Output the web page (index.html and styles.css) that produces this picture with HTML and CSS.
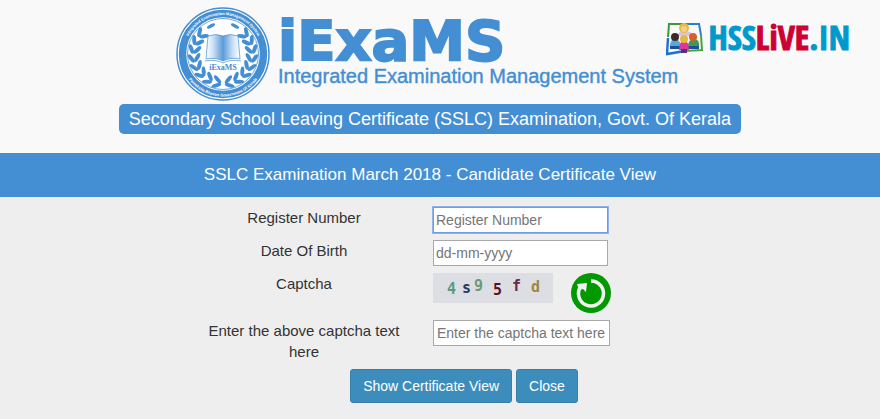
FILE: index.html
```html
<!DOCTYPE html>
<html lang="en">
<head>
    <meta charset="UTF-8">
    <meta name="viewport" content="width=device-width, initial-scale=1.0">
    <title>iExaMS - SSLC Certificate View</title>
    <link rel="stylesheet" href="styles.css">
</head>
<body>
    <header class="header">
        <div class="brand-row">
            <div class="brand">
                <svg class="seal" viewBox="0 0 96 96" role="img" aria-label="iExaMS seal">
                    <defs>
                        <path id="ringTop" d="M9 48a39 39 0 0 1 78 0"/>
                        <path id="ringBottom" d="M5.500 48a42.500 42.500 0 0 0 85 0"/>
                        <linearGradient id="page" x1="0" x2="1">
                            <stop offset="0" stop-color="#fff"/>
                            <stop offset="0.2" stop-color="#cfe1f5"/>
                            <stop offset="0.5" stop-color="#5c9cd9"/>
                            <stop offset="0.8" stop-color="#cfe1f5"/>
                            <stop offset="1" stop-color="#fff"/>
                        </linearGradient>
                        <g id="leaf">
                            <ellipse cx="16" cy="48" rx="2" ry="5" transform="rotate(-28 16 48)"/>
                            <ellipse cx="22" cy="48" rx="2" ry="5" transform="rotate(38 22 48)"/>
                        </g>
                        <g id="branch">
                            <use href="#leaf" transform="rotate(-78 48 48)"/>
                            <use href="#leaf" transform="rotate(-60 48 48)"/>
                            <use href="#leaf" transform="rotate(-42 48 48)"/>
                            <use href="#leaf" transform="rotate(-25 48 48)"/>
                            <use href="#leaf" transform="rotate(-8 48 48)"/>
                            <use href="#leaf" transform="rotate(9 48 48)"/>
                            <use href="#leaf" transform="rotate(26 48 48)"/>
                            <use href="#leaf" transform="rotate(43 48 48)"/>
                            <ellipse cx="36" cy="20" rx="1.600" ry="4.500" transform="rotate(62 36 20)"/>
                        </g>
                    </defs>
                    <circle cx="47" cy="48" r="46" fill="#fff" stroke="#448ed3" stroke-width="1.500"/>
                    <g transform="translate(-1 0)">
                        <circle cx="48" cy="48" r="40.500" fill="none" stroke="#448ed3" stroke-width="7.500"/>
                        <circle cx="48" cy="48" r="35.500" fill="none" stroke="#448ed3" stroke-width="0.800"/>
                        <g class="seal-ring">
                            <text><textPath href="#ringTop" startOffset="50%">Integrated Examination Management System</textPath></text>
                            <text><textPath href="#ringBottom" startOffset="50%">Pareeksha Bhavan Government Of Kerala</textPath></text>
                        </g>
                        <g fill="#448ed3">
                            <use href="#branch"/>
                            <use href="#branch" transform="matrix(-1 0 0 1 96 0)"/>
                        </g>
                        <path d="M33 30q8-3 15 0q7-3 15 0l2 23q-10-2-17 2q-7-4-17-2z" fill="url(#page)" stroke="#448ed3" stroke-width="0.700"/>
                        <path d="M30 55q11-2 18 2q7-4 18-2" fill="none" stroke="#448ed3" stroke-width="0.700"/>
                        <text class="seal-name" x="48" y="64">iExaMS</text>
                    </g>
                </svg>
                <div class="brand-text">
                    <h1 class="brand-name">iExaMS</h1>
                    <p class="brand-tagline">Integrated Examination Management System</p>
                </div>
            </div>
            <a class="hsslive" href="#">
                <svg class="hsslive-icon" viewBox="0 0 38 34" aria-hidden="true">
                    <path d="M2 15L3 2h16" fill="none" stroke="#3a9a3a" stroke-width="2"/>
                    <path d="M19 2h14l2 11" fill="none" stroke="#2a7fd0" stroke-width="2"/>
                    <path d="M2 16L1 32l18-3" fill="none" stroke="#1e6fd0" stroke-width="2.400"/>
                    <path d="M19 29l17-1-1-15" fill="none" stroke="#4aa43a" stroke-width="2"/>
                    <path d="M11 14q1-5 8-5t8 5z" fill="#d9c6dc"/>
                    <circle cx="18" cy="6" r="5" fill="#e8b93e"/>
                    <circle cx="18" cy="7" r="3" fill="#f2d08a"/>
                    <path d="M4 25q0-8 5-8t6 8z" fill="#5aa9d6"/>
                    <path d="M22 25q0-8 6-8t5 8z" fill="#3f9a58"/>
                    <path d="M4 24h11v3H4zM22 24h11v3H22z" fill="#1c4f9a"/>
                    <circle cx="9" cy="15" r="4" fill="#3c2a28"/>
                    <circle cx="27" cy="15" r="4" fill="#d8602a"/>
                    <path d="M13 28q0-9 5-9t5 9z" fill="#e0359a"/>
                    <path d="M15 27h6v4h-6z" fill="#5a2f7a"/>
                    <circle cx="18" cy="17" r="4" fill="#e6b93c"/>
                </svg>
                <span class="hsslive-name">HSS<span class="hsslive-live">LiVE</span>.IN</span>
            </a>
        </div>
        <h2 class="board">Secondary School Leaving Certificate (SSLC) Examination, Govt. Of Kerala</h2>
    </header>

    <main>
        <h3 class="title-bar">SSLC Examination March 2018 - Candidate Certificate View</h3>
        <form class="view-form">
            <div class="fields">
                <label for="regno">Register Number</label>
                <div><input class="active" type="text" id="regno" placeholder="Register Number"></div>

                <label for="dob">Date Of Birth</label>
                <div><input type="text" id="dob" placeholder="dd-mm-yyyy"></div>

                <span class="field-name">Captcha</span>
                <div class="captcha-row">
                    <svg class="captcha" viewBox="0 0 120 30" role="img" aria-label="Captcha image">
                        <rect width="120" height="30" fill="#dcdee4"/>
                        <text x="14" y="21" fill="#5a9a80">4</text>
                        <text x="29" y="20" fill="#1f3a66">s</text>
                        <text x="41" y="18" fill="#6a9a7a">9</text>
                        <text x="60" y="22" fill="#5a0f22">5</text>
                        <text x="79" y="18" fill="#6a2a44">f</text>
                        <text x="98" y="19" fill="#9a8840">d</text>
                    </svg>
                    <button class="refresh" type="button" aria-label="Refresh captcha">
                        <svg viewBox="0 0 40 40" aria-hidden="true">
                            <circle cx="20" cy="20" r="20" fill="#009a00"/>
                            <path d="M20 8A12.500 12.500 0 1 1 10 13" fill="none" stroke="#f2f2f2" stroke-width="3.500"/>
                            <path d="M6 11l10-1-1 9-3-3-4 1z" fill="#f2f2f2"/>
                        </svg>
                    </button>
                </div>

                <label for="captcha">Enter the above captcha text here</label>
                <div><input class="wide" type="text" id="captcha" placeholder="Enter the captcha text here"></div>
            </div>
            <div class="actions">
                <button class="btn" type="submit">Show Certificate View</button>
                <button class="btn" type="button">Close</button>
            </div>
        </form>
    </main>
</body>
</html>
```

FILE: styles.css
```css
* {
    margin: 0;
    padding: 0;
    box-sizing: border-box;
}

body {
    font-family: "Liberation Sans", Arial, sans-serif;
    font-size: 15px;
    line-height: 21px;
    color: #333;
    background: #eee;
}

.header {
    background: #f9f9f9;
    padding: 6px 30px 19px 10px;
}

.brand-row {
    display: flex;
    justify-content: space-between;
    align-items: flex-start;
    padding-left: 166px;
}

.brand {
    display: flex;
    gap: 6px;
    min-width: 0;
}

.seal {
    flex: none;
    width: 96px;
    height: 96px;
}

.seal-ring {
    font-size: 4px;
    font-weight: bold;
    fill: #fff;
    text-anchor: middle;
}

.seal-name {
    font-family: "Liberation Serif", serif;
    font-size: 8px;
    font-weight: bold;
    fill: #448ed3;
    text-anchor: middle;
}

.brand-text {
    min-width: 0;
    padding-top: 12px;
    color: #448ed3;
}

.brand-name {
    font-family: "DejaVu Sans", sans-serif;
    font-size: 56px;
    line-height: 46px;
    -webkit-text-stroke: 2px #448ed3;
}

.brand-tagline {
    font-size: 20px;
    line-height: 24px;
    white-space: nowrap;
    -webkit-text-stroke: 0.4px #448ed3;
}

.hsslive {
    display: flex;
    flex: none;
    gap: 4px;
    padding-top: 16px;
    text-decoration: none;
    color: #0099cc;
}

.hsslive-icon {
    width: 38px;
    height: 34px;
}

.hsslive-name {
    font-family: "Liberation Sans Narrow", "Open Sans Condensed", "Liberation Sans", sans-serif;
    font-size: 34px;
    line-height: 30px;
    font-weight: bold;
    -webkit-text-stroke: 1px currentColor;
}

.hsslive-live {
    color: #cc0033;
}

.board {
    width: fit-content;
    margin: 2px auto 0;
    padding: 0 10px;
    border-radius: 5px;
    background: #448ed3;
    color: #fff;
    font-size: 18px;
    font-weight: normal;
    line-height: 30px;
}

.title-bar {
    padding-right: 20px;
    background: #448ed3;
    color: #fff;
    font-size: 17px;
    font-weight: normal;
    line-height: 44px;
    text-align: center;
}

.view-form {
    padding: 10px 0 16px;
}

.fields {
    display: grid;
    grid-template-columns: 206px 198px;
    gap: 7px 26px;
    justify-content: center;
    padding-right: 48px;
}

.fields label,
.field-name {
    text-align: center;
}

input {
    display: block;
    width: 175px;
    height: 26px;
    padding: 1px 2px;
    border: 1px solid #a9a9a9;
    background: #fff;
    font-family: inherit;
    font-size: 14px;
    color: #333;
}

input::placeholder {
    color: #757575;
}

input.active,
input:focus {
    border-color: #6f9be0;
    outline: 1px solid #8fb4f0;
}

input.wide {
    width: 177px;
    padding: 1px 3px;
}

.captcha-row {
    display: flex;
    align-items: flex-start;
    gap: 18px;
}

.captcha {
    width: 120px;
    height: 30px;
    font-family: "DejaVu Sans Mono", monospace;
    font-size: 15px;
    font-weight: bold;
}

.refresh {
    width: 40px;
    height: 40px;
    border: none;
    background: none;
    cursor: pointer;
}

.refresh svg {
    display: block;
}

.actions {
    display: flex;
    justify-content: center;
    gap: 4px;
    padding-top: 7px;
    padding-left: 48px;
}

.btn {
    height: 34px;
    padding: 0 12px;
    border: 1px solid #367fa9;
    border-radius: 3px;
    background: #3c8dbc;
    color: #fff;
    font-family: inherit;
    font-size: 14px;
    cursor: pointer;
}

.btn:hover {
    background: #367fa9;
}
```
